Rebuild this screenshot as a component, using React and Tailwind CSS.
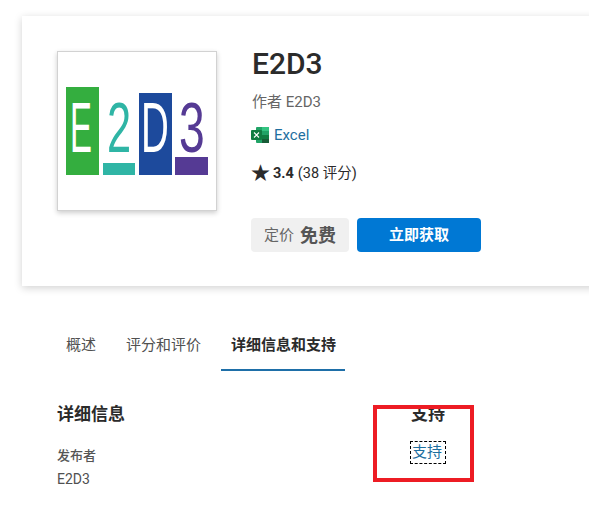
import React from 'react';

const Logo = () => (
    <svg viewBox="0 0 158 158" className="w-full h-full">
        <rect x="8" y="35" width="33" height="88" fill="#34ae3f" />
        <rect x="45" y="111" width="32" height="12" fill="#2fb5a5" />
        <rect x="81" y="41" width="33" height="82" fill="#1d4a9c" />
        <rect x="117" y="105" width="33" height="18" fill="#553a94" />
        <text transform="translate(12 100) scale(0.47 1)" fontFamily="Liberation Sans" fontSize="70" fill="#ffffff">E</text>
        <text transform="translate(49 100) scale(0.62 1)" fontFamily="Liberation Sans" fontSize="70" fill="#2fb5a5">2</text>
        <text transform="translate(83 100) scale(0.55 1)" fontFamily="Liberation Sans" fontSize="70" fill="#ffffff">D</text>
        <text transform="translate(121 100) scale(0.66 1)" fontFamily="Liberation Sans" fontSize="70" fill="#553a94">3</text>
    </svg>
);

const ExcelIcon = () => (
    <svg viewBox="0 0 18 16" className="w-[18px] h-4">
        <rect x="5" y="0" width="13" height="16" rx="1" fill="#21a366" />
        <rect x="11" y="0" width="7" height="4" fill="#33c481" />
        <rect x="5" y="8" width="13" height="4" fill="#107c41" />
        <rect x="11" y="12" width="7" height="4" fill="#185c37" />
        <rect x="0" y="3" width="11" height="10" rx="1" fill="#107c41" />
        <path d="M3 5.5 L8 10.5 M8 5.5 L3 10.5" stroke="#fff" strokeWidth="1.1" />
    </svg>
);

const App = () => {
    return (
        <div className="w-[589px] h-[507px] overflow-hidden bg-white relative text-[#2b2b2b] font-['Roboto','Noto_Sans_CJK_SC',sans-serif]">
            {/* Product card */}
            <div className="ml-[22px] mt-4 w-[600px] h-[270px] bg-white shadow-[0_2px_8px_rgba(0,0,0,0.18)] flex pl-[35px] pt-[35px]">
                <div className="w-40 h-40 border border-[#d2d2d2] shadow-[0_2px_5px_rgba(0,0,0,0.2)] shrink-0">
                    <Logo />
                </div>
                <div className="ml-[34px] flex flex-col">
                    <h1 className="text-[30px] leading-[30px] font-medium -mt-[2px] ml-px">E2D3</h1>
                    <p className="text-[15px] leading-5 text-[#666] mt-[13px] ml-px">作者 E2D3</p>
                    <div className="flex items-center gap-[5px] mt-[13px]">
                        <ExcelIcon />
                        <span className="text-[15px] leading-5 text-[#1e6f9f]">Excel</span>
                    </div>
                    <div className="flex items-center mt-[19px] text-[14.5px] leading-5">
                        <span className="text-[19px] leading-5 mr-[3px]">★</span>
                        <span className="font-bold mr-1">3.4</span>
                        <span>(38 评分)</span>
                    </div>
                    <div className="flex mt-[34px] gap-2">
                        <div className="w-[98px] h-[34px] bg-[#f0f0f0] rounded-sm flex items-center justify-center">
                            <span className="text-[15px] text-[#666] mr-[6px]">定价</span>
                            <span className="text-[18px] font-bold text-[#555]">免费</span>
                        </div>
                        <button className="w-[124px] h-[34px] bg-[#0078d4] rounded-sm text-white text-[15px] font-bold">立即获取</button>
                    </div>
                </div>
            </div>

            {/* Tabs */}
            <div className="flex ml-[57px] mt-[37px] text-[15px]">
                <div className="px-[9px] h-[48px] pt-[11px] text-[#505050]">概述</div>
                <div className="ml-[12px] px-[9px] h-[48px] pt-[11px] text-[#505050]">评分和评价</div>
                <div className="ml-[11px] pl-[10px] pr-[9px] h-[48px] pt-[11px] font-semibold border-b-2 border-[#1e6fa8]">详细信息和支持</div>
            </div>

            {/* Details */}
            <div className="flex ml-[57px] mt-[31px]">
                <div className="w-[354px]">
                    <h2 className="text-[17px] leading-6 font-bold">详细信息</h2>
                    <p className="text-[13px] leading-5 font-medium text-[#555] mt-[20px]">发布者</p>
                    <p className="text-sm leading-5 text-[#505050] mt-[3px]">E2D3</p>
                </div>
                <div>
                    <h2 className="text-[17px] leading-6 font-bold">支持</h2>
                    <a className="block -ml-px w-9 h-[23px] text-[15px] leading-[21px] pl-px text-[#1e6f9f] border border-dashed border-black mt-[15px]">支持</a>
                </div>
            </div>

            {/* Red annotation box */}
            <div className="absolute left-[373px] top-[405px] w-[101px] h-[77px] border-4 border-[#ed1c24]"></div>
        </div>
    );
};

export default App;
